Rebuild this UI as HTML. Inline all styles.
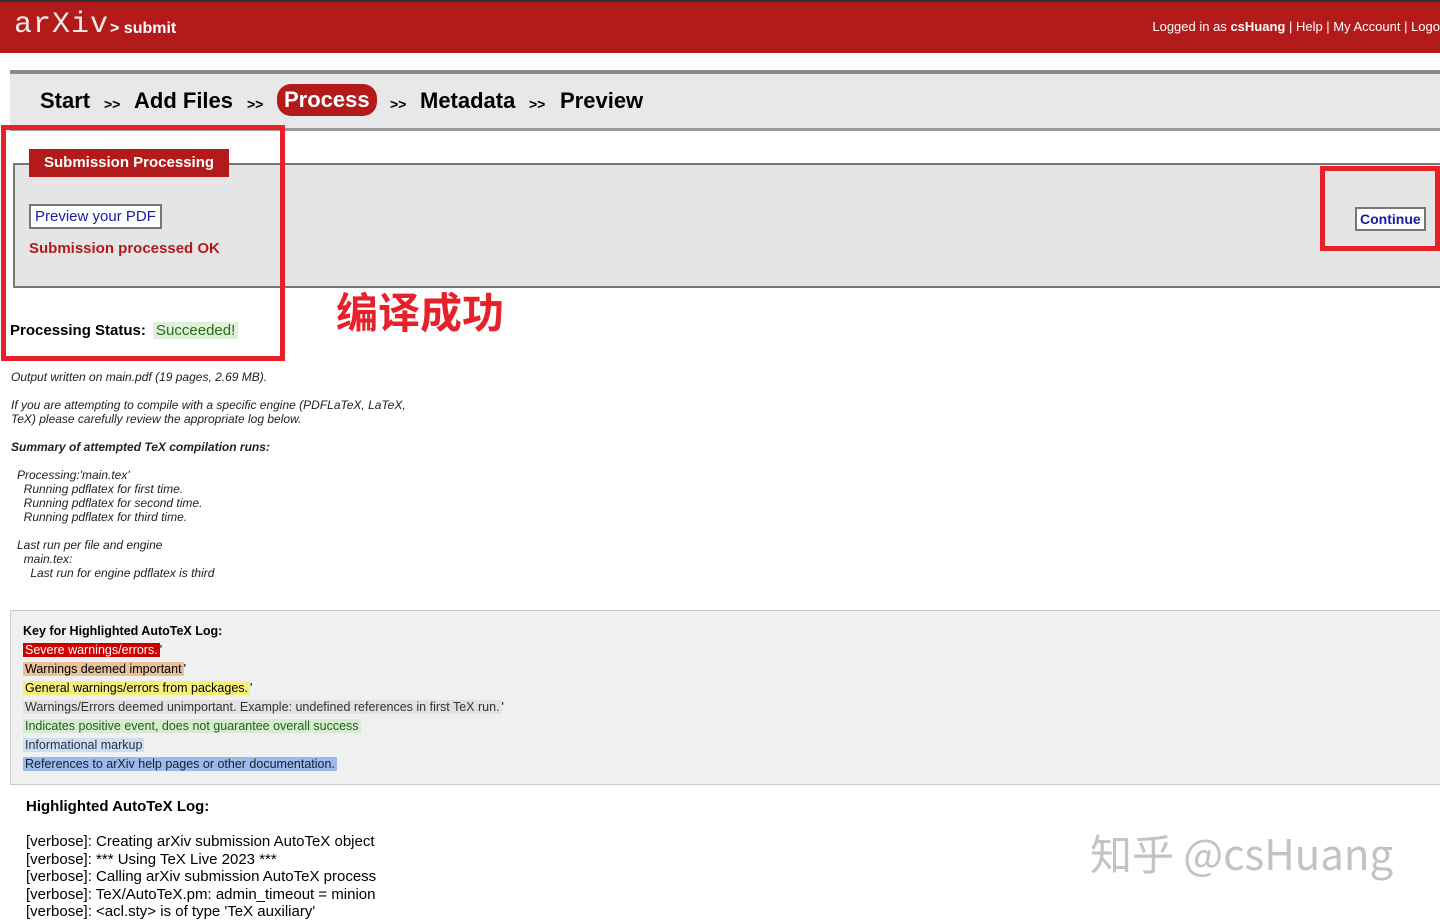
<!DOCTYPE html>
<html><head><meta charset="utf-8"><style>
*{margin:0;padding:0;box-sizing:border-box}
body{width:1440px;height:914px;overflow:hidden;background:#fff;font-family:"Liberation Sans",Arial,sans-serif;position:relative;color:#000}
.hdr{position:absolute;left:0;top:0;width:1440px;height:53px;background:#b31b1b;border-top:2px solid #333}
.logo{position:absolute;left:14px;top:6px;color:#f4e8e8;font-family:"Liberation Mono",monospace;font-size:30px;letter-spacing:1px}
.sub{position:absolute;left:110px;top:18px;color:#fff;font-weight:bold;font-size:16px}
.login{position:absolute;right:0;top:17px;color:#fff;font-size:13px;white-space:nowrap}
.steps{position:absolute;left:10px;top:70px;width:1430px;height:61px;background:#e8e8e8;border-top:4px solid #888;border-bottom:3px solid #999}
.steps span{position:absolute;top:14px;font-size:22px;font-weight:bold}
.steps .g{font-size:14px;top:22px}
.proc{background:#b31b1b;color:#fff;border-radius:14px;padding:3px 7px;top:10px!important}
.panel{position:absolute;left:13px;top:163px;width:1427px;height:125px;background:#e5e5e5;border:2px solid #777;border-right:none}
.ptitle{position:absolute;left:29px;top:149px;background:#b31b1b;color:#fff;font-weight:bold;font-size:15px;padding:5px 15px;height:28px}
.pdf{position:absolute;left:29px;top:204px;border:2px solid #777;background:#fff;color:#1a1aa6;font-size:15px;padding:2px 4px}
.ok{position:absolute;left:29px;top:240px;color:#b31b1b;font-weight:bold;font-size:15px}
.cont{position:absolute;left:1355px;top:207px;border:2px solid #777;background:#fff;color:#1a1aa6;font-weight:bold;font-size:14px;padding:2px 3px}
.rb{position:absolute;border:5px solid #e8202a}
.cn{position:absolute;left:336px;top:280px;color:#e8202a;font-size:42px;font-weight:bold;font-family:"Noto Sans CJK SC",sans-serif}
.st{position:absolute;left:10px;top:322px;font-weight:bold;font-size:15px}
.st i{font-style:normal;font-weight:normal;background:#dff0d8;color:#2a6a1a;padding:0 3px;margin-left:3px}
.sm{position:absolute;font-style:italic;font-size:12px;color:#222;line-height:14px;white-space:pre}
.key{position:absolute;left:10px;top:610px;width:1430px;height:175px;background:#f0f0f0;border-top:1px solid #ccc;border-bottom:1px solid #ccc;border-left:1px solid #ccc}
.key div{position:absolute;left:12px;font-size:12.5px}
.key span{padding:0 2px}
.log{position:absolute;left:26px;top:798px;font-size:15px}
.logl{position:absolute;left:26px;top:833px;font-size:15px;line-height:17.5px;white-space:pre}
.wm{position:absolute;left:1090px;top:822px;color:#aaa;font-size:42px;opacity:.7;font-family:"Noto Sans CJK SC",sans-serif}
</style></head><body>
<div class="hdr"><div class="logo">arXiv</div><div class="sub">&gt; submit</div>
<div class="login">Logged in as <b>csHuang</b> | Help | My Account | Logo</div></div>
<div class="steps">
<span style="left:30px">Start</span><span class="g" style="left:94px">&gt;&gt;</span>
<span style="left:124px">Add Files</span><span class="g" style="left:237px">&gt;&gt;</span>
<span class="proc" style="left:267px">Process</span><span class="g" style="left:380px">&gt;&gt;</span>
<span style="left:410px">Metadata</span><span class="g" style="left:519px">&gt;&gt;</span>
<span style="left:550px">Preview</span></div>
<div class="panel"></div>
<div class="ptitle">Submission Processing</div>
<div class="pdf">Preview your PDF</div>
<div class="ok">Submission processed OK</div>
<div class="cont">Continue</div>
<div class="rb" style="left:1px;top:125px;width:284px;height:236px"></div>
<div class="rb" style="left:1320px;top:166px;width:120px;height:85px"></div>
<div class="cn">编译成功</div>
<div class="st">Processing Status: <i>Succeeded!</i></div>
<div class="sm" style="left:11px;top:370px">Output written on main.pdf (19 pages, 2.69 MB).</div>
<div class="sm" style="left:11px;top:398px">If you are attempting to compile with a specific engine (PDFLaTeX, LaTeX,
TeX) please carefully review the appropriate log below.</div>
<div class="sm" style="left:11px;top:440px;font-weight:bold">Summary of attempted TeX compilation runs:</div>
<div class="sm" style="left:17px;top:468px">Processing:'main.tex'
  Running pdflatex for first time.
  Running pdflatex for second time.
  Running pdflatex for third time.

Last run per file and engine
  main.tex:
    Last run for engine pdflatex is third</div>
<div class="key">
<div style="top:13px;font-weight:bold">Key for Highlighted AutoTeX Log:</div>
<div style="top:32px"><span style="background:#c00;color:#fff">Severe warnings/errors.</span>'</div>
<div style="top:51px"><span style="background:#e8c09a">Warnings deemed important</span>'</div>
<div style="top:70px"><span style="background:#f5f07a">General warnings/errors from packages.</span>'</div>
<div style="top:89px"><span style="background:#e2e2e2;color:#333">Warnings/Errors deemed unimportant. Example: undefined references in first TeX run.</span>'</div>
<div style="top:108px"><span style="background:#d6ecd2;color:#2a5a1a">Indicates positive event, does not guarantee overall success</span></div>
<div style="top:127px"><span style="background:#cfdff0;color:#234">Informational markup</span></div>
<div style="top:146px"><span style="background:#9db8ea;color:#123">References to arXiv help pages or other documentation.</span></div>
</div>
<div class="log"><b>Highlighted AutoTeX Log:</b></div>
<div class="logl">[verbose]: Creating arXiv submission AutoTeX object
[verbose]: *** Using TeX Live 2023 ***
[verbose]: Calling arXiv submission AutoTeX process
[verbose]: TeX/AutoTeX.pm: admin_timeout = minion
[verbose]: &lt;acl.sty&gt; is of type 'TeX auxiliary'</div>
<div class="wm">知乎 @csHuang</div>
</body></html>
